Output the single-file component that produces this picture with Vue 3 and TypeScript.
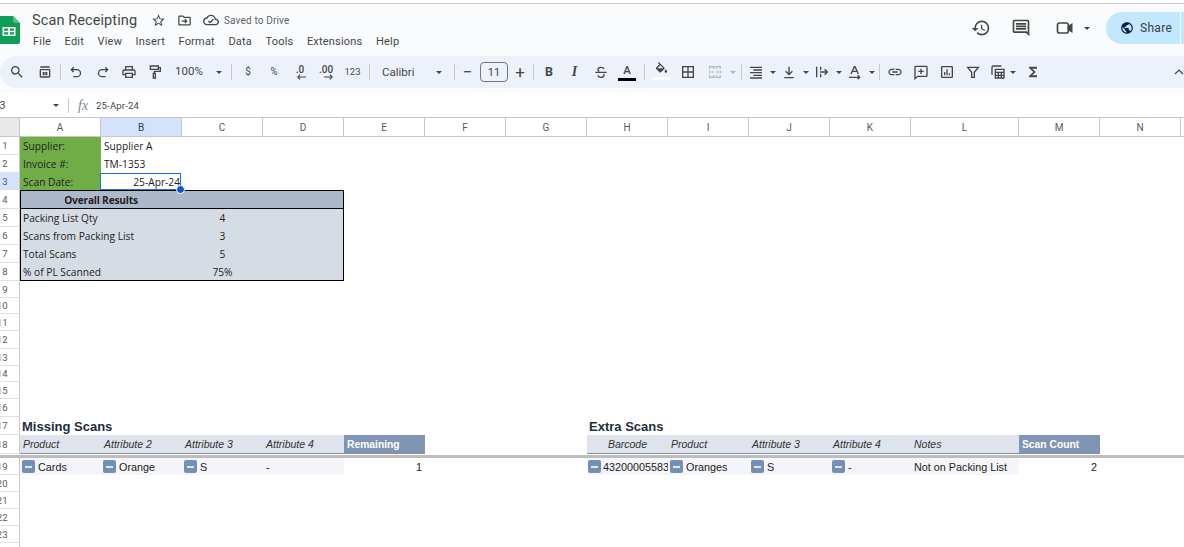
<script setup lang="ts">
interface Icon { fill?: string; stroke?: string }
interface ToolItem {
  kind: 'icon' | 'text' | 'caret' | 'sep' | 'decimal' | 'font' | 'size' | 'fill' | 'color'
  w: number
  icon?: Icon
  text?: string
  dim?: boolean
  arrow?: 'left' | 'right'
}

const icons: Record<string, Icon> = {
  search: { fill: 'M15.5 14h-.79l-.28-.27A6.471 6.471 0 0 0 16 9.5 6.5 6.5 0 1 0 9.5 16c1.61 0 3.09-.59 4.23-1.57l.27.28v.79l5 4.99L20.49 19l-4.99-5zm-6 0C7.01 14 5 11.99 5 9.5S7.01 5 9.5 5 14 7.01 14 9.5 11.99 14 9.5 14z' },
  menus: { stroke: 'M5 4.5h14M6 8.5h12a1 1 0 0 1 1 1v9a1 1 0 0 1-1 1H6a1 1 0 0 1-1-1v-9a1 1 0 0 1 1-1zM9.5 12v5M12 12v5M14.5 12v5' },
  undo: { stroke: 'M8.5 5 5 8.5 8.5 12M5.5 8.5h8a5 5 0 0 1 0 10.5H8' },
  redo: { stroke: 'M15.5 5 19 8.5 15.5 12M18.5 8.5h-8a5 5 0 0 0 0 10.5H16' },
  print: { fill: 'M19 8h-1V3H6v5H5c-1.66 0-3 1.34-3 3v6h4v4h12v-4h4v-6c0-1.66-1.34-3-3-3zM8 5h8v3H8V5zm8 12v2H8v-4h8v2zm2-2v-2H6v2H4v-4c0-.55.45-1 1-1h14c.55 0 1 .45 1 1v4h-2z' },
  paint: { stroke: 'M5 3h12v5H5zM17 5.500h3V11h-9v3M9.500 14h3v7h-3z' },
  strike: { stroke: 'M16.500 7.500C16 5.800 14.300 5 12 5 9.500 5 7.500 6.200 7.500 8.300c0 1.200.6 2.100 1.700 2.700M3.500 12.500h17M15.800 15c.4.5.7 1.100.7 1.800 0 2.100-2 3.200-4.500 3.200-2.500 0-4.300-1-4.800-2.800' },
  borders: { stroke: 'M4 4h16v16H4zM12 4v16M4 12h16' },
  merge: { stroke: 'M4 7V4h6v3M14 7V4h6v3M4 17v3h6v-3M14 17v3h6v-3M4 10v4M20 10v4M7 12h3M14 12h3' },
  align: { stroke: 'M3 5h18M8 9h13M3 13h18M8 17h13M3 21h18' },
  valign: { stroke: 'M12 4v12M7 11l5 5 5-5M5 20.500h14' },
  wrap: { stroke: 'M4 4v16M10 4v5M10 15v5M9 12h11M16 8l4 4-4 4' },
  rotate: { stroke: 'M6 15 11 4h1l5 11M8 11h8M3 20h15M16 17l3 3-3 3' },
  link: { fill: 'M3.9 12c0-1.71 1.39-3.1 3.1-3.1h4V7H7c-2.76 0-5 2.24-5 5s2.24 5 5 5h4v-1.9H7c-1.71 0-3.1-1.39-3.1-3.1zM8 13h8v-2H8v2zm9-6h-4v1.9h4c1.71 0 3.1 1.39 3.1 3.1s-1.39 3.1-3.1 3.1h-4V17h4c2.76 0 5-2.24 5-5s-2.24-5-5-5z' },
  addComment: { stroke: 'M4 3.500h16a1 1 0 0 1 1 1v13a1 1 0 0 1-1 1H7l-4 3.500V4.500a1 1 0 0 1 1-1zM12 7v8M8 11h8' },
  chart: { stroke: 'M5 4h14a1 1 0 0 1 1 1v14a1 1 0 0 1-1 1H5a1 1 0 0 1-1-1V5a1 1 0 0 1 1-1zM8.500 17v-5M12 17V8M15.500 17v-3' },
  filter: { stroke: 'M4 5h16l-6 7.500V20h-4v-7.500z' },
  view: { stroke: 'M3 16V5a2 2 0 0 1 2-2h12M8 8h13v13H8zM8 12.500h13M8 17h13M12.500 12.500V21M17 12.500V21' },
  sigma: { fill: 'M18 4H6v2l6.500 6L6 18v2h12v-3h-7l5-5-5-5h7z' }
}

const caret: ToolItem = { kind: 'caret', w: 9 }

const toolbar: ToolItem[] = [
  { kind: 'icon', w: 28, icon: icons.search },
  { kind: 'icon', w: 27, icon: icons.menus },
  { kind: 'sep', w: 4 },
  { kind: 'icon', w: 28, icon: icons.undo },
  { kind: 'icon', w: 26, icon: icons.redo },
  { kind: 'icon', w: 26, icon: icons.print },
  { kind: 'icon', w: 26, icon: icons.paint },
  { kind: 'text', w: 42, text: '100%' },
  { kind: 'caret', w: 17 },
  { kind: 'sep', w: 8 },
  { kind: 'text', w: 26, text: '$' },
  { kind: 'text', w: 26, text: '%' },
  { kind: 'decimal', w: 26, text: '.0', arrow: 'left' },
  { kind: 'decimal', w: 26, text: '.00', arrow: 'right' },
  { kind: 'text', w: 27, text: '123' },
  { kind: 'sep', w: 6 },
  { kind: 'font', w: 78, text: 'Calibri' },
  { kind: 'sep', w: 8 },
  { kind: 'text', w: 19, text: '−' },
  { kind: 'size', w: 34, text: '11' },
  { kind: 'text', w: 18, text: '+' },
  { kind: 'sep', w: 8 },
  { kind: 'text', w: 24, text: 'B' },
  { kind: 'text', w: 27, text: 'I' },
  { kind: 'icon', w: 26, icon: icons.strike },
  { kind: 'color', w: 26, text: 'A' },
  { kind: 'sep', w: 8 },
  { kind: 'fill', w: 26 },
  { kind: 'icon', w: 27, icon: icons.borders },
  { kind: 'icon', w: 27, icon: icons.merge, dim: true },
  { kind: 'caret', w: 10, dim: true },
  { kind: 'sep', w: 6 },
  { kind: 'icon', w: 24, icon: icons.align },
  caret,
  { kind: 'icon', w: 24, icon: icons.valign },
  caret,
  { kind: 'icon', w: 24, icon: icons.wrap },
  caret,
  { kind: 'icon', w: 24, icon: icons.rotate },
  caret,
  { kind: 'sep', w: 6 },
  { kind: 'icon', w: 26, icon: icons.link },
  { kind: 'icon', w: 26, icon: icons.addComment },
  { kind: 'icon', w: 26, icon: icons.chart },
  { kind: 'icon', w: 26, icon: icons.filter },
  { kind: 'icon', w: 24, icon: icons.view },
  { kind: 'caret', w: 6 },
  { kind: 'icon', w: 34, icon: icons.sigma }
]

const menu = ['File', 'Edit', 'View', 'Insert', 'Format', 'Data', 'Tools', 'Extensions', 'Help']
const columns = ['A', 'B', 'C', 'D', 'E', 'F', 'G', 'H', 'I', 'J', 'K', 'L', 'M', 'N', 'O']

interface Cell { text?: string; cls?: string; span?: number; filter?: boolean }
interface Row { n: number; h: number; cells: Cell[]; active?: boolean }

const blank = (n: number): Cell => ({ span: n })

const rows: Row[] = [
  { n: 1, h: 18, cells: [{ text: 'Supplier:', cls: 'green' }, { text: 'Supplier A' }] },
  { n: 2, h: 18, cells: [{ text: 'Invoice #:', cls: 'green' }, { text: 'TM-1353' }] },
  { n: 3, h: 17, active: true, cells: [{ text: 'Scan Date:', cls: 'green' }, { text: '25-Apr-24', cls: 'selected' }] },
  { n: 4, h: 19, cells: [{ text: 'Overall Results', span: 2, cls: 'res-head bl center bold' }, { span: 2, cls: 'res-head br' }] },
  { n: 5, h: 18, cells: [{ text: 'Packing List Qty', span: 2, cls: 'res bl' }, { text: '4', cls: 'res center' }, { cls: 'res br' }] },
  { n: 6, h: 18, cells: [{ text: 'Scans from Packing List', span: 2, cls: 'res bl' }, { text: '3', cls: 'res center' }, { cls: 'res br' }] },
  { n: 7, h: 18, cells: [{ text: 'Total Scans', span: 2, cls: 'res bl' }, { text: '5', cls: 'res center' }, { cls: 'res br' }] },
  { n: 8, h: 18, cells: [{ text: '% of PL Scanned', span: 2, cls: 'res bl bb' }, { text: '75%', cls: 'res center bb' }, { cls: 'res br bb' }] },
  { n: 9, h: 17, cells: [] },
  { n: 10, h: 16, cells: [] },
  { n: 11, h: 17, cells: [] },
  { n: 12, h: 18, cells: [] },
  { n: 13, h: 17, cells: [] },
  { n: 14, h: 16, cells: [] },
  { n: 15, h: 17, cells: [] },
  { n: 16, h: 18, cells: [] },
  { n: 17, h: 18, cells: [{ text: 'Missing Scans', span: 2, cls: 'section' }, blank(5), { text: 'Extra Scans', span: 2, cls: 'section' }] },
  {
    n: 18, h: 19, cells: [
      { text: 'Product', cls: 'th' }, { text: 'Attribute 2', cls: 'th' }, { text: 'Attribute 3', cls: 'th' }, { text: 'Attribute 4', cls: 'th' },
      { text: 'Remaining', cls: 'th-dark' }, blank(2),
      { text: 'Barcode', cls: 'th center' }, { text: 'Product', cls: 'th' }, { text: 'Attribute 3', cls: 'th' }, { text: 'Attribute 4', cls: 'th' }, { text: 'Notes', cls: 'th' },
      { text: 'Scan Count', cls: 'th-dark' }
    ]
  }
]

const rowsBelow: Row[] = [
  {
    n: 19, h: 17, cells: [
      { text: 'Cards', cls: 'td', filter: true }, { text: 'Orange', cls: 'td', filter: true }, { text: 'S', cls: 'td', filter: true }, { text: '-', cls: 'td' },
      { text: '1', cls: 'num' }, blank(2),
      { text: '43200005583', cls: 'td tight', filter: true }, { text: 'Oranges', cls: 'td', filter: true }, { text: 'S', cls: 'td', filter: true }, { text: '-', cls: 'td', filter: true }, { text: 'Not on Packing List', cls: 'td' },
      { text: '2', cls: 'num' }
    ]
  },
  { n: 20, h: 17, cells: [] },
  { n: 21, h: 17, cells: [] },
  { n: 22, h: 17, cells: [] },
  { n: 23, h: 17, cells: [] },
  { n: 24, h: 17, cells: [] }
]

const spanOf = (c: Cell) => ({ gridColumn: `span ${c.span ?? 1}` })
</script>

<template>
  <div class="app">
    <header class="head">
      <svg class="logo" viewBox="0 0 22 28">
        <path d="M0 2a2 2 0 0 1 2-2h13l7 7v19a2 2 0 0 1-2 2H2a2 2 0 0 1-2-2z" fill="#0f9d58" />
        <path d="M15 0l7 7h-5a2 2 0 0 1-2-2z" fill="#57bb8a" />
        <path d="M4.500 11h13v9h-13zM6 12.500v2.300h4.200v-2.300zm5.800 0v2.300H16v-2.300zM6 16.300v2.200h4.200v-2.200zm5.800 0v2.200H16v-2.200z" fill="#fff" fill-rule="evenodd" />
      </svg>
      <div class="head-main">
        <div class="title-row">
          <span class="title">Scan Receipting</span>
          <svg class="ti star" viewBox="0 0 24 24"><path fill="currentColor" d="M22 9.240l-7.190-.62L12 2 9.190 8.630 2 9.240l5.460 4.730L5.820 21 12 17.270 18.180 21l-1.630-7.030L22 9.240zM12 15.400l-3.760 2.270 1-4.280-3.320-2.880 4.380-.38L12 6.100l1.710 4.040 4.380.38-3.320 2.880 1 4.280L12 15.400z" /></svg>
          <svg class="ti folder" viewBox="0 0 24 24"><path fill="currentColor" d="M20 6h-8l-2-2H4c-1.100 0-2 .9-2 2v12c0 1.100.9 2 2 2h16c1.100 0 2-.9 2-2V8c0-1.100-.9-2-2-2zm0 12H4V6h5.170l2 2H20v10z" /><path fill="none" stroke="currentColor" stroke-width="2" d="M7.500 13h8M12.500 10l3 3-3 3" /></svg>
          <svg class="ti cloud" viewBox="0 0 24 24"><path fill="currentColor" d="M19.350 10.040C18.670 6.590 15.640 4 12 4 9.110 4 6.600 5.640 5.350 8.040 2.340 8.360 0 10.910 0 14c0 3.310 2.690 6 6 6h13c2.760 0 5-2.240 5-5 0-2.640-2.050-4.780-4.650-4.960zM19 18H6c-2.210 0-4-1.790-4-4s1.790-4 4-4h.71C7.370 7.690 9.480 6 12 6c3.040 0 5.500 2.460 5.500 5.500v.5H19c1.660 0 3 1.340 3 3s-1.340 3-3 3z" /><path fill="none" stroke="currentColor" stroke-width="2" d="M8 13.500l2.500 2.500 5-5" /></svg>
          <span class="saved">Saved to Drive</span>
        </div>
        <nav class="menu">
          <span v-for="m in menu" :key="m">{{ m }}</span>
        </nav>
      </div>
      <div class="head-right">
        <svg class="hi history" viewBox="0 0 24 24"><path fill="currentColor" d="M13 3a9 9 0 0 0-9 9H1l3.890 3.890.07.14L9 12H6c0-3.870 3.130-7 7-7s7 3.130 7 7-3.130 7-7 7c-1.930 0-3.680-.79-4.940-2.060l-1.420 1.420A8.954 8.954 0 0 0 13 21a9 9 0 0 0 0-18zm-1 5v5l4.280 2.540.72-1.210-3.500-2.080V8H12z" /></svg>
        <svg class="hi comment" viewBox="0 0 24 24"><path fill="currentColor" d="M21.990 4c0-1.100-.89-2-1.990-2H4c-1.100 0-2 .9-2 2v12c0 1.100.9 2 2 2h14l4 4-.01-18zM20 4v13.170L18.830 16H4V4h16zM6 12h12v2H6zm0-3h12v2H6zm0-3h12v2H6z" /></svg>
        <svg class="hi video" viewBox="0 0 24 24"><rect x="3" y="6" width="13" height="12" rx="2.500" fill="none" stroke="currentColor" stroke-width="2" /><path fill="currentColor" d="M15 10l6-4v12l-6-4z" /></svg>
        <i class="caret head-caret"></i>
        <div class="share">
          <svg viewBox="0 0 24 24"><path fill="#041e49" d="M12 2C6.480 2 2 6.480 2 12s4.480 10 10 10 10-4.480 10-10S17.520 2 12 2zm-1 17.930c-3.950-.49-7-3.850-7-7.930 0-.62.08-1.210.21-1.790L9 15v1c0 1.100.9 2 2 2v1.930zm6.900-2.540c-.26-.81-1-1.390-1.900-1.390h-1v-3c0-.55-.45-1-1-1H8v-2h2c.55 0 1-.45 1-1V7h2c1.100 0 2-.9 2-2v-.41c2.930 1.190 5 4.060 5 7.410 0 2.080-.8 3.970-2.100 5.390z" /></svg>
          <span>Share</span>
          <i class="share-split"></i>
        </div>
      </div>
    </header>

    <div class="toolbar-wrap">
      <div class="toolbar">
        <template v-for="(it, i) in toolbar" :key="i">
          <div class="tool" :class="['k-' + it.kind, { dim: it.dim }]" :style="{ width: it.w + 'px' }">
            <svg v-if="it.kind === 'icon' && it.icon" viewBox="0 0 24 24">
              <path v-if="it.icon.fill" :d="it.icon.fill" fill="currentColor" />
              <path v-if="it.icon.stroke" :d="it.icon.stroke" fill="none" stroke="currentColor" stroke-width="2" />
            </svg>
            <i v-else-if="it.kind === 'caret'" class="caret"></i>
            <i v-else-if="it.kind === 'sep'" class="sep-line"></i>
            <span v-else-if="it.kind === 'text'" class="tool-text" :class="'t-' + it.text">{{ it.text }}</span>
            <span v-else-if="it.kind === 'decimal'" class="decimal-box">
              <span>{{ it.text }}</span>
              <svg viewBox="0 0 12 6" :class="it.arrow"><path :d="it.arrow === 'left' ? 'M11 3H2M4.500 .5 2 3l2.500 2.500' : 'M1 3h9M7.500 .5 10 3 7.500 5.500'" fill="none" stroke="currentColor" stroke-width="1.200" /></svg>
            </span>
            <template v-else-if="it.kind === 'font'">
              <span class="font-name">{{ it.text }}</span>
              <i class="caret"></i>
            </template>
            <span v-else-if="it.kind === 'size'" class="size-box">{{ it.text }}</span>
            <span v-else-if="it.kind === 'color'" class="color-a">{{ it.text }}<i></i></span>
            <span v-else-if="it.kind === 'fill'" class="fill-box">
              <svg viewBox="0 0 24 24"><path fill="currentColor" d="M16.560 8.940 7.620 0 6.210 1.410l2.380 2.380-5.150 5.150c-.59.59-.59 1.540 0 2.120l5.500 5.500c.29.29.68.44 1.060.44s.77-.15 1.060-.44l5.500-5.500c.59-.58.59-1.530 0-2.120zM5.210 10 10 5.210 14.790 10H5.210zM19 11.500s-2 2.170-2 3.500c0 1.100.9 2 2 2s2-.9 2-2c0-1.330-2-3.500-2-3.500z" /></svg>
              <i></i>
            </span>
          </div>
        </template>
        <svg class="collapse" viewBox="0 0 10 6"><path d="M1 5l4-4 4 4" fill="none" stroke="#444746" stroke-width="1.200" /></svg>
      </div>
    </div>

    <div class="formula">
      <div class="name-box"><span>B3</span><i class="caret"></i></div>
      <i class="formula-sep"></i>
      <span class="fx">fx</span>
      <span class="formula-text">25-Apr-24</span>
    </div>

    <div class="sheet">
      <div class="col-heads">
        <div class="corner"></div>
        <div v-for="c in columns" :key="c" class="col-head" :class="{ active: c === 'B' }">{{ c }}</div>
      </div>

      <div v-for="r in rows" :key="r.n" class="row" :style="{ height: r.h + 'px' }">
        <div class="row-head" :class="{ active: r.active }"><span>{{ r.n }}</span></div>
        <div class="cells">
          <div v-for="(c, i) in r.cells" :key="i" class="cell" :class="c.cls" :style="spanOf(c)">
            <button v-if="c.filter" class="chip"><i></i></button>
            <span v-if="c.text">{{ c.text }}</span>
            <i v-if="c.cls === 'selected'" class="handle"></i>
          </div>
        </div>
      </div>

      <div class="freeze"></div>

      <div v-for="r in rowsBelow" :key="r.n" class="row" :style="{ height: r.h + 'px' }">
        <div class="row-head"><span>{{ r.n }}</span></div>
        <div class="cells">
          <div v-for="(c, i) in r.cells" :key="i" class="cell" :class="c.cls" :style="spanOf(c)">
            <button v-if="c.filter" class="chip"><i></i></button>
            <span v-if="c.text">{{ c.text }}</span>
          </div>
        </div>
      </div>
    </div>
  </div>
</template>

<style>
html, body { margin: 0; background: #fff; overflow: hidden; }
</style>

<style scoped>
.app {
  width: 1184px;
  height: 547px;
  overflow: hidden;
  font-family: Roboto, "Liberation Sans", sans-serif;
  color: #444746;
  background: #fff;
  padding-top: 3px;
  box-sizing: border-box;
}

/* header */
.head {
  height: 53px;
  display: flex;
  background: #f9fbfd;
  border-top: 1px solid #c8c8c8;
  box-sizing: border-box;
}
.logo { width: 22px; height: 28px; margin: 12px 0 0 -2px; flex: none; }
.head-main { margin-left: 12px; }
.title-row { display: flex; align-items: center; height: 20px; margin-top: 6px; }
.title { font-size: 14.5px; color: #444746; width: 119px; letter-spacing: .1px; }
.ti { width: 15px; height: 15px; color: #444746; flex: none; }
.ti.folder { margin-left: 11px; }
.ti.cloud { margin-left: 11px; width: 16px; height: 16px; }
.saved { font-size: 10px; margin-left: 5px; letter-spacing: .15px; color: #5f6368; }
.menu { display: flex; gap: 13.5px; margin: 5px 0 0 1px; font-size: 11px; letter-spacing: .2px; line-height: 14px; color: #444746; }
.head-right { margin-left: auto; display: flex; align-items: center; height: 32px; margin-top: 8px; color: #444746; }
.hi { width: 20px; height: 20px; flex: none; }
.hi.comment { margin-left: 20px; }
.hi.video { margin-left: 24px; }
.head-caret { margin: 0 16px 0 9px; }
.share {
  width: 84px;
  height: 32px;
  margin-right: -6px;
  border-radius: 16px 0 0 16px;
  background: #c2e7ff;
  display: flex;
  align-items: center;
  font-size: 12px;
  letter-spacing: .3px;
  color: #3c4043;
  box-sizing: border-box;
  padding-left: 14px;
}
.share svg { width: 14px; height: 14px; margin-right: 6px; }
.share-split { width: 1px; height: 32px; background: #fff; margin-left: 8px; }

/* toolbar */
.toolbar-wrap { background: #f9fbfd; height: 38px; box-sizing: border-box; }
.toolbar {
  height: 32px;
  background: #edf2fa;
  border-radius: 16px 0 0 16px;
  display: flex;
  align-items: center;
  padding-left: 3px;
  color: #444746;
}
.tool { display: flex; align-items: center; justify-content: center; flex: none; height: 100%; }
.tool svg { width: 16px; height: 16px; }
.tool.dim { color: #b4b8bd; }
.tool-text { font-size: 11.5px; line-height: 1; }
.t-\$, .t-\% { font-size: 10px; }
.t-123 { font-size: 9.5px; }
.t-−, .t-\+ { font-size: 17px; }
.t-B { font-weight: 700; font-size: 12.5px; }
.t-I { font-style: italic; font-weight: 700; font-size: 14px; font-family: "Liberation Serif", serif; }
.sep-line { width: 1px; height: 16px; background: #c7c7c7; }
.caret {
  display: block;
  width: 0;
  height: 0;
  border-left: 3.5px solid transparent;
  border-right: 3.5px solid transparent;
  border-top: 3.5px solid currentColor;
  flex: none;
}
.decimal-box { position: relative; display: block; font-size: 10px; font-weight: 500; height: 18px; line-height: 13px; }
.decimal-box svg { position: absolute; width: 11px; height: 6px; top: 11px; }
.decimal-box svg.left { right: -3px; }
.decimal-box svg.right { right: -1px; }
.k-font { justify-content: flex-start; padding-left: 10px; box-sizing: border-box; }
.font-name { font-size: 11.5px; width: 54px; }
.size-box {
  width: 28px;
  height: 20px;
  border: 1px solid #747775;
  border-radius: 4px;
  box-sizing: border-box;
  display: flex;
  align-items: center;
  justify-content: center;
  font-size: 11px;
}
.color-a { display: flex; flex-direction: column; align-items: center; font-size: 11.5px; font-weight: 500; line-height: 13px; }
.color-a i { width: 18px; height: 3px; background: #000; margin-top: 1px; }
.fill-box { display: flex; flex-direction: column; align-items: center; margin-top: -3px; }
.fill-box svg { width: 15px; height: 15px; }
.fill-box i { width: 18px; height: 3px; background: #fff; }
.collapse { width: 10px; height: 6px; margin-left: auto; flex: none; }

/* formula bar */
.formula { height: 23px; display: flex; align-items: center; background: #fff; font-size: 9.5px; color: #444746; }
.name-box { width: 60px; display: flex; align-items: center; overflow: hidden; flex: none; font-size: 10.5px; }
.name-box span { margin-left: -7px; width: 60px; flex: none; }
.formula-sep { width: 1px; height: 15px; background: #c7c7c7; margin-left: 8px; }
.fx { font-family: "Liberation Serif", serif; font-style: italic; font-size: 14px; color: #80868b; margin-left: 9px; width: 18px; }
.formula-text { letter-spacing: .2px; }

/* sheet */
.sheet { font-size: 10px; border-top: 1px solid #c7c7c7; }
.col-heads {
  display: grid;
  grid-template-columns: 20px repeat(11, 81px) 108px repeat(3, 81px);
  height: 19px;
  border-bottom: 1px solid #c7c7c7;
  box-sizing: border-box;
}
.corner { background: #e9e9e9; border-right: 1px solid #c7c7c7; }
.col-head {
  display: flex;
  align-items: center;
  justify-content: center;
  font-size: 10px;
  color: #575a5c;
  border-right: 1px solid #c7c7c7;
}
.col-head.active { background: #d3e3fd; color: #3c4043; }
.row { display: flex; }
.row-head {
  width: 20px;
  flex: none;
  overflow: hidden;
  border-right: 1px solid #c7c7c7;
  border-bottom: 1px solid #e1e1e1;
  box-sizing: border-box;
  font-size: 9.5px;
  color: #575a5c;
  display: flex;
  align-items: center;
}
.row-head span { width: 7.500px; flex: none; display: flex; justify-content: flex-end; white-space: nowrap; }
.row-head.active { background: #d3e3fd; }
.cells {
  display: grid;
  grid-template-columns: repeat(11, 81px) 108px repeat(3, 81px);
  flex: none;
}
.cell {
  font-family: "Open Sans", "Liberation Sans", sans-serif;
  font-size: 10.2px;
  color: #222;
  display: flex;
  align-items: center;
  padding: 0 3px;
  box-sizing: border-box;
  white-space: nowrap;
  min-width: 0;
  position: relative;
}
.green { background: #70ad47; }
.selected {
  border: 1px solid #1a73e8;
  justify-content: flex-end;
  padding-right: 0;
  background: #fff;
  margin: 0 1px 0 -1px;
  z-index: 1;
}
.handle {
  position: absolute;
  right: -5px;
  bottom: -5px;
  width: 7px;
  height: 7px;
  border-radius: 50%;
  background: #0b57d0;
  border: 1px solid #fff;
  z-index: 2;
}
.res-head { background: #adb9ca; border-top: 1px solid #000; border-bottom: 1px solid #000; }
.res { background: #d6dce4; }
.bl { border-left: 1px solid #000; padding-left: 2px; }
.br { border-right: 1px solid #000; }
.bb { border-bottom: 1px solid #000; }
.center { justify-content: center; }
.bold { font-weight: 700; letter-spacing: -.2px; }
.section { font-family: "Liberation Sans", sans-serif; font-weight: 700; font-size: 13px; color: #1f2d3d; padding: 0 0 1px 2px; align-items: flex-end; }
.th, .th-dark { font-family: "Liberation Sans", sans-serif; font-size: 10.5px; border-bottom: 1px solid #7f8ea6; padding-left: 3px; }
.th { background: #dfe3ec; font-style: italic; color: #333; }
.th-dark { background: #8094b3; color: #fff; font-weight: 700; font-size: 10.3px; }
.td { font-family: "Liberation Sans", sans-serif; font-size: 10.8px; background: #f3f5f8; padding-left: 2px; color: #222; }
.td > span:only-child { padding-left: 1px; }
.num { font-family: "Liberation Sans", sans-serif; font-size: 10.8px; justify-content: flex-end; color: #222; }
.chip {
  width: 13px;
  height: 13px;
  border: 0;
  padding: 0;
  border-radius: 2px;
  background: #7390b4;
  display: flex;
  align-items: center;
  justify-content: center;
  flex: none;
  margin-right: 3px;
}
.chip i { width: 7px; height: 2px; background: #dfe6ef; display: block; }
.tight { padding-left: 1px; padding-right: 0; }
.tight .chip { margin-right: 2px; }
.freeze { height: 4px; background: #fff; border-bottom: 3px solid #bdbdbd; box-sizing: border-box; }
</style>
